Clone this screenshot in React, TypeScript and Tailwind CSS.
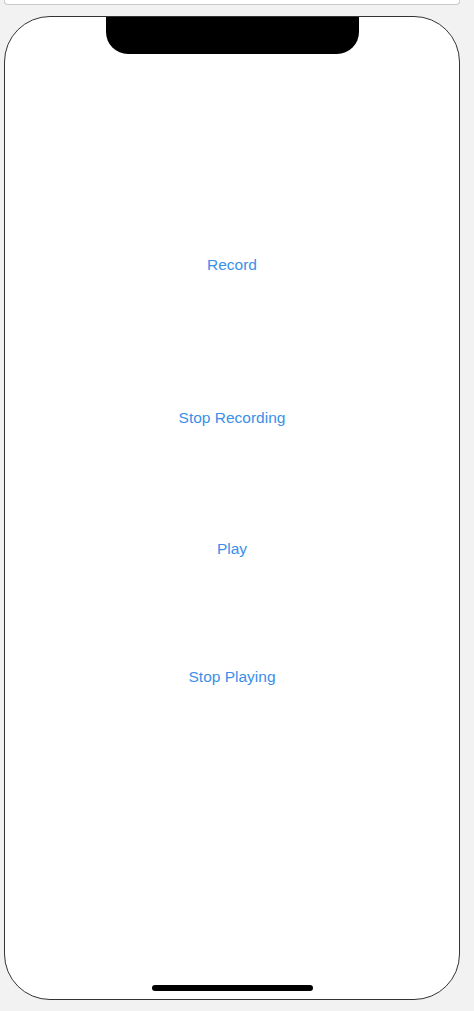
export default function App() {
  const buttons = [
    { label: 'Record', mt: 'mt-[238px]' },
    { label: 'Stop Recording', mt: 'mt-[133px]' },
    { label: 'Play', mt: 'mt-[111px]' },
    { label: 'Stop Playing', mt: 'mt-[108px]' },
  ];

  return (
    <div className="w-full h-[1011px] bg-[#f2f2f2] overflow-hidden" style={{ fontFamily: '"Liberation Sans", Arial, sans-serif' }}>
      {/* Top strip */}
      <div className="ml-[4px] w-[456px] h-[5px] bg-white border border-t-0 border-[#c9c9c9] rounded-b-[4px]" />

      {/* Phone */}
      <div className="relative mt-[11px] ml-[4px] w-[456px] h-[984px] bg-white border-[1.5px] border-[#333] rounded-[46px] overflow-hidden">
        {/* Notch */}
        <div className="absolute top-0 left-[101px] w-[253px] h-[37px] bg-black rounded-b-[22px]" />

        <div className="flex flex-col items-center">
          {buttons.map(b => (
            <button
              key={b.label}
              className={`${b.mt} text-[15.5px] leading-[20px] text-[#3b8fe9]`}
            >
              {b.label}
            </button>
          ))}
        </div>

        {/* Home indicator */}
        <div className="absolute bottom-[8px] left-[147px] w-[161px] h-[6px] bg-black rounded-full" />
      </div>
    </div>
  );
}
